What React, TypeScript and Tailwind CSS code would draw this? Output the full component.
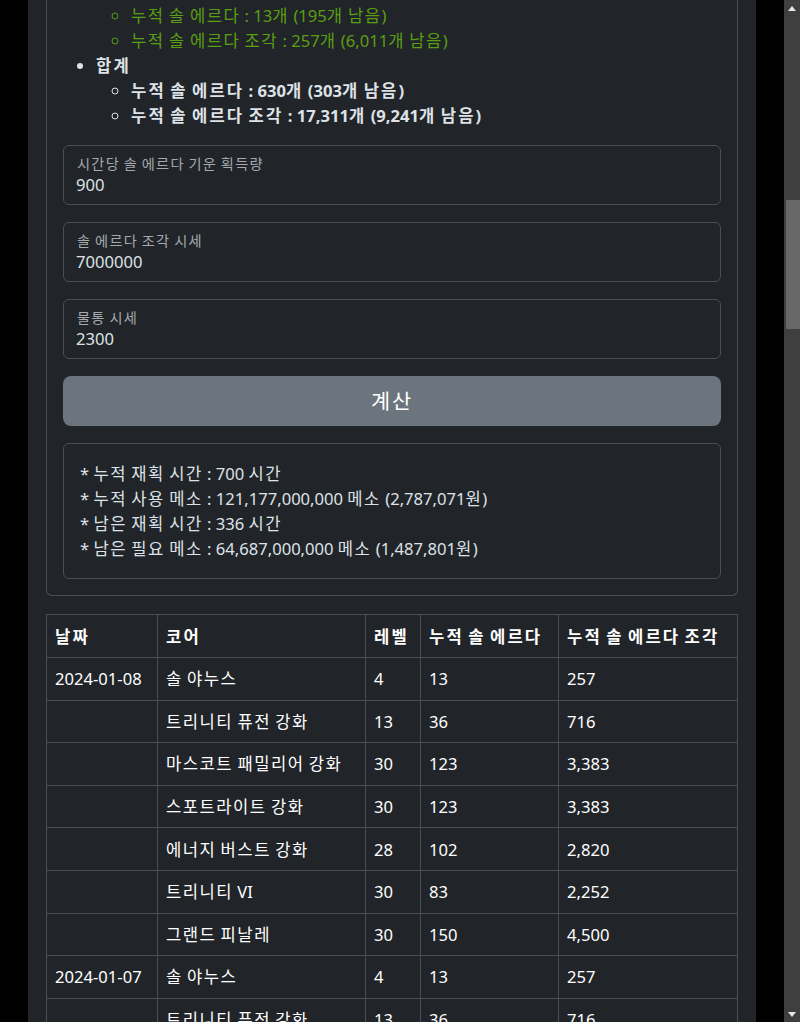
import React from 'react';

const summary = ['누적 솔 에르다 : 13개 (195개 남음)', '누적 솔 에르다 조각 : 257개 (6,011개 남음)'];

const totals = ['누적 솔 에르다 : 630개 (303개 남음)', '누적 솔 에르다 조각 : 17,311개 (9,241개 남음)'];

const fields = [
  { label: '시간당 솔 에르다 기운 획득량', value: '900' },
  { label: '솔 에르다 조각 시세', value: '7000000' },
  { label: '물통 시세', value: '2300' },
];

const results = [
  '* 누적 재획 시간 : 700 시간',
  '* 누적 사용 메소 : 121,177,000,000 메소 (2,787,071원)',
  '* 남은 재획 시간 : 336 시간',
  '* 남은 필요 메소 : 64,687,000,000 메소 (1,487,801원)',
];

const cores = [
  ['솔 야누스', '4', '13', '257'],
  ['트리니티 퓨전 강화', '13', '36', '716'],
  ['마스코트 패밀리어 강화', '30', '123', '3,383'],
  ['스포트라이트 강화', '30', '123', '3,383'],
  ['에너지 버스트 강화', '28', '102', '2,820'],
  ['트리니티 VI', '30', '83', '2,252'],
  ['그랜드 피날레', '30', '150', '4,500'],
];

const rows = [
  ...cores.map((c, i) => [i === 0 ? '2024-01-08' : '', ...c]),
  ...cores.map((c, i) => [i === 0 ? '2024-01-07' : '', ...c]),
];

const headers = ['날짜', '코어', '레벨', '누적 솔 에르다', '누적 솔 에르다 조각'];
const colWidths = ['w-[111px]', 'w-[208px]', 'w-[55px]', 'w-[138px]', 'w-[179px]'];

// hangul in the reference font runs a bit wider, so space the syllables out
function Ko({ text, bold = false }: { text: string; bold?: boolean }) {
  const parts = text.split(/([가-힣]+)/);
  return (
    <>
      {parts.map((p, i) =>
        /[가-힣]/.test(p) ? (
          <span key={i} className={bold ? 'tracking-[0.13em]' : 'tracking-[0.09em]'}>
            {p}
          </span>
        ) : (
          <React.Fragment key={i}>{p}</React.Fragment>
        )
      )}
    </>
  );
}

export default function App() {
  return (
    <div className="flex h-[1022px] overflow-hidden bg-black font-['Noto_Sans','Noto_Sans_CJK_KR',sans-serif] text-[16.6px] leading-[25px] text-[#dee2e6]">
      <div className="flex flex-1 justify-center">
        <div className="w-[728px] bg-[#212529] px-[18px]">
          {/* calculator card */}
          <div className="rounded-b-[6px] border border-t-0 border-[#4b4f54] px-4 pb-4 pt-[3px]">
            <ul className="mb-[17px] list-disc pl-[33px]">
              <li className="list-none">
                <ul className="list-[circle] pl-[35px] text-[#5a9e12]">
                  {summary.map((s) => (
                    <li key={s}>
                      <Ko text={s} />
                    </li>
                  ))}
                </ul>
              </li>
              <li className="font-bold">
                <Ko text="합계" bold />
                <ul className="list-[circle] pl-[35px]">
                  {totals.map((t) => (
                    <li key={t}>
                      <Ko text={t} bold />
                    </li>
                  ))}
                </ul>
              </li>
            </ul>

            {fields.map((f) => (
              <div key={f.label} className="mb-[17px] h-[60px] rounded-[6px] border border-[#4b4f54] px-3">
                <div className="pt-[8px] pl-[1px] text-[14.2px] leading-[20px] text-[#a5a9ad]">
                  <Ko text={f.label} />
                </div>
                <div className="leading-[22px]">{f.value}</div>
              </div>
            ))}

            <button className="mb-[17px] flex h-[50px] w-full items-center justify-center rounded-[8px] bg-[#6c757d] text-[20.8px] text-white">
              <Ko text="계산" />
            </button>

            <div className="rounded-[6px] border border-[#4b4f54] px-4 py-[17px]">
              {results.map((r) => (
                <div key={r}>
                  <Ko text={r} />
                </div>
              ))}
            </div>
          </div>

          {/* history table */}
          <table className="mt-[18px] w-full table-fixed border-collapse">
            <colgroup>
              {colWidths.map((w, i) => (
                <col key={i} className={w} />
              ))}
            </colgroup>
            <thead>
              <tr className="h-[43px]">
                {headers.map((h) => (
                  <th key={h} className="border border-[#4b4f54] px-2 text-left font-bold text-white">
                    <Ko text={h} bold />
                  </th>
                ))}
              </tr>
            </thead>
            <tbody>
              {rows.map((r, i) => (
                <tr key={i} className="h-[42.6px]">
                  {r.map((c, j) => (
                    <td key={j} className="whitespace-nowrap border border-[#4b4f54] px-2 text-white">
                      <Ko text={c} />
                    </td>
                  ))}
                </tr>
              ))}
            </tbody>
          </table>
        </div>
      </div>

      {/* scrollbar */}
      <div className="flex w-[16px] flex-col bg-[#3f3f3f]">
        <div className="flex h-[16px] items-center justify-center">
          <svg width="8" height="5" viewBox="0 0 8 5">
            <polygon points="4,0 8,5 0,5" fill="#e6e6e6" />
          </svg>
        </div>
        <div className="h-[184px]" />
        <div className="ml-[2px] h-[129px] bg-[#686868]" />
        <div className="flex-1" />
        <div className="flex h-[16px] items-center justify-center">
          <svg width="8" height="5" viewBox="0 0 8 5">
            <polygon points="0,0 8,0 4,5" fill="#e6e6e6" />
          </svg>
        </div>
      </div>
    </div>
  );
}
